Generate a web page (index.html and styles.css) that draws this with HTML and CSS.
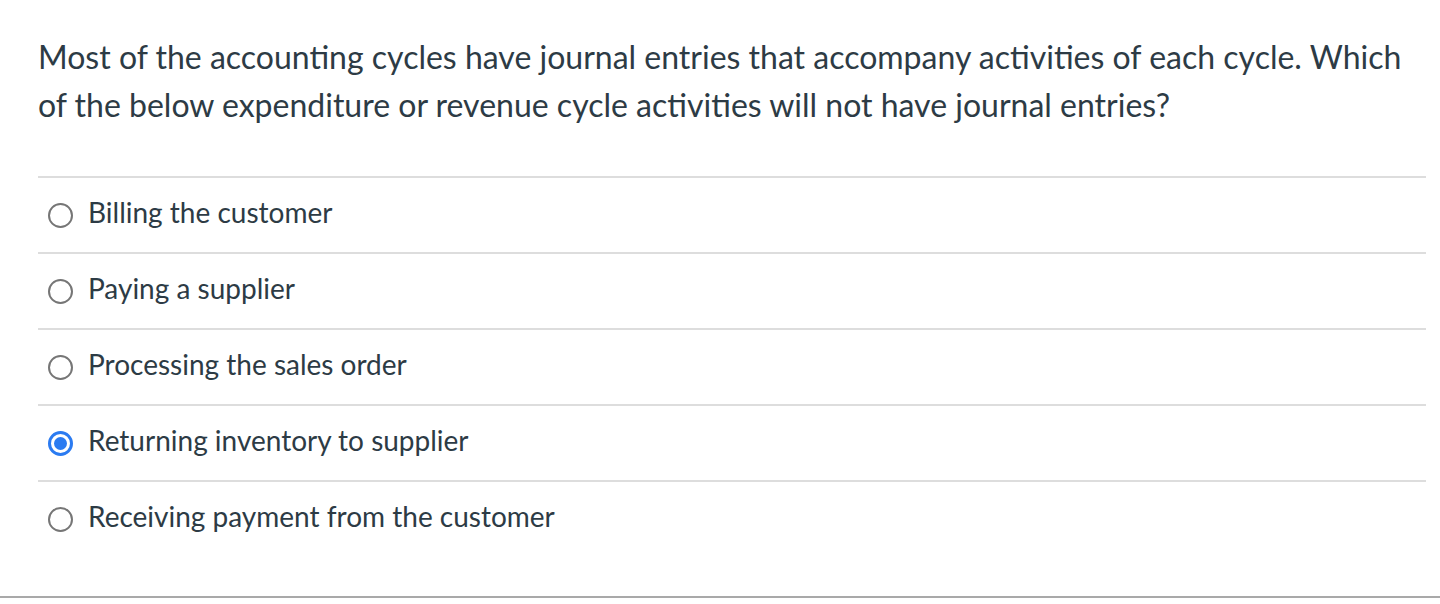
FILE: index.html
```html
<!DOCTYPE html>
<html lang="en">
<head>
<meta charset="utf-8">
<title>Quiz question</title>
<link rel="stylesheet" href="styles.css">
</head>
<body>
<div class="question">
  <p class="question-text">Most of the accounting cycles have journal entries that accompany activities of each cycle. Which of the below expenditure or revenue cycle activities will not have journal entries?</p>
  <div class="answers">
    <label class="answer"><span class="radio"></span><span class="label-text">Billing the customer</span></label>
    <label class="answer"><span class="radio"></span><span class="label-text">Paying a supplier</span></label>
    <label class="answer"><span class="radio"></span><span class="label-text">Processing the sales order</span></label>
    <label class="answer"><span class="radio checked"></span><span class="label-text">Returning inventory to supplier</span></label>
    <label class="answer"><span class="radio"></span><span class="label-text">Receiving payment from the customer</span></label>
  </div>
</div>
</body>
</html>
```

FILE: styles.css
```css
html, body {
  margin: 0;
  padding: 0;
  background: #ffffff;
}
body {
  font-family: Lato, "Noto Sans", sans-serif;
  color: #2d3b45;
  width: 1440px;
  height: 604px;
  overflow: hidden;
}
.question {
  padding: 33px 14px 0 38px;
  height: 563px;
  border-bottom: 2px solid #a9a9a9;
}
.question-text {
  margin: 0;
  font-size: 32px;
  line-height: 48px;
}
.answers {
  margin-top: 47px;
}
.answer {
  display: flex;
  align-items: center;
  height: 74px;
  border-top: 2px solid #dddddd;
  padding-left: 10px;
}
.radio {
  box-sizing: border-box;
  width: 25px;
  height: 25px;
  border-radius: 50%;
  border: 2px solid #767676;
  margin-right: 15px;
  flex: none;
  position: relative;
}
.radio.checked {
  border: 3px solid #2b7bf1;
}
.radio.checked::after {
  content: "";
  position: absolute;
  left: 3px;
  top: 3px;
  width: 13px;
  height: 13px;
  border-radius: 50%;
  background: #2b7bf1;
}
.label-text {
  font-size: 28px;
  line-height: 30px;
  position: relative;
  top: -3px;
}
```
